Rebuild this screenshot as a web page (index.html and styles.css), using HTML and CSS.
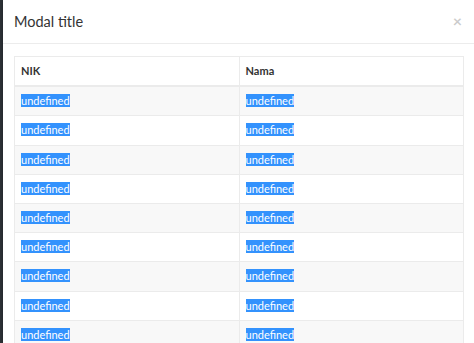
FILE: index.html
```html
<!DOCTYPE html>
<html lang="en">
<head>
    <meta charset="UTF-8">
    <meta name="viewport" content="width=device-width, initial-scale=1.0">
    <title>Modal</title>
    <link rel="stylesheet" href="styles.css">
</head>
<body>

<div class="modal">
    <div class="modal-header">
        <button class="close">&times;</button>
        <h4 class="modal-title">Modal title</h4>
    </div>

    <div class="modal-body">
        <table class="result-table">
            <thead>
                <tr>
                    <th>NIK</th>
                    <th>Nama</th>
                </tr>
            </thead>
            <tbody>
                <tr><td><span class="sel">undefined</span></td><td><span class="sel">undefined</span></td></tr>
                <tr><td><span class="sel">undefined</span></td><td><span class="sel">undefined</span></td></tr>
                <tr><td><span class="sel">undefined</span></td><td><span class="sel">undefined</span></td></tr>
                <tr><td><span class="sel">undefined</span></td><td><span class="sel">undefined</span></td></tr>
                <tr><td><span class="sel">undefined</span></td><td><span class="sel">undefined</span></td></tr>
                <tr><td><span class="sel">undefined</span></td><td><span class="sel">undefined</span></td></tr>
                <tr><td><span class="sel">undefined</span></td><td><span class="sel">undefined</span></td></tr>
                <tr><td><span class="sel">undefined</span></td><td><span class="sel">undefined</span></td></tr>
                <tr><td><span class="sel">undefined</span></td><td><span class="sel">undefined</span></td></tr>
            </tbody>
        </table>
    </div>
</div>

</body>
</html>
```

FILE: styles.css
```css
* {
    box-sizing: border-box;
    margin: 0;
    padding: 0;
}

html, body {
    height: 100%;
    overflow: hidden;
}

body {
    font-family: 'Lato', sans-serif;
    font-size: 11px;
    background-color: #2e3338;
    color: #333;
}

.modal {
    margin-left: 3px;
    height: 100%;
    background-color: #fff;
    box-shadow: 0 0 4px rgba(0, 0, 0, 0.4);
}

.modal-header {
    padding: 12px 12px 11px 11px;
    border-bottom: 1px solid #ececec;
}

.modal-title {
    font-size: 14.5px;
    font-weight: normal;
    line-height: 20px;
    color: #333;
}

.close {
    float: right;
    margin-top: -1px;
    margin-right: 0;
    background: none;
    border: none;
    font-family: 'Lato', sans-serif;
    font-size: 16px;
    font-weight: bold;
    line-height: 20px;
    color: #000;
    opacity: 0.2;
    cursor: pointer;
}

.modal-body {
    padding: 12px 10px 0 11px;
}

.result-table {
    width: 100%;
    border-collapse: collapse;
    border: 1px solid #ebebeb;
}

.result-table th, .result-table td {
    width: 50%;
    padding: 6px 6px 6px 6px;
    line-height: 16.2px;
    text-align: left;
    border: 1px solid #ebebeb;
}

.result-table th {
    font-weight: bold;
    border-bottom-width: 2px;
}

.result-table tbody tr:nth-child(odd) td {
    background-color: #f8f8f8;
}

.sel {
    background-color: #3392fd;
    color: #fff;
}
```
